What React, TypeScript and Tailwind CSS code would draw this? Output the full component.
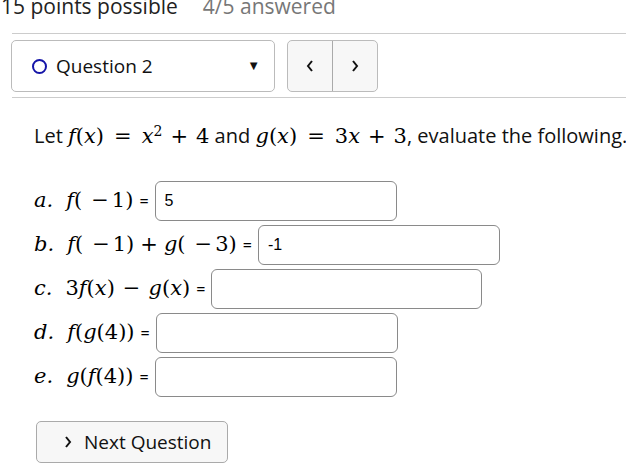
import React from 'react';

const sans = { fontFamily: '"Open Sans", "Noto Sans", sans-serif' };

function M({ children }: { children: React.ReactNode }) {
  return <span className="font-['DejaVu_Serif',serif] text-[21px] text-black">{children}</span>;
}

function I({ children }: { children: React.ReactNode }) {
  return <i className="italic">{children}</i>;
}

// binary operators with TeX-like spacing
function Op({ children, wide }: { children: React.ReactNode; wide?: boolean }) {
  return <span className={wide ? 'mx-[8px]' : 'mx-[6px]'}>{children}</span>;
}

function Eq() {
  return <span className="mx-[10px]">=</span>;
}

// the "( − 1)" style minus
function Neg() {
  return <span className="ml-[9px] mr-[3px]">−</span>;
}

function Row({ label, value, width, children }: { label: string; value?: string; width: number; children: React.ReactNode }) {
  return (
    <div className="flex items-center h-10">
      <M>
        <I>{label}.</I>
        <span className="ml-[13px]">{children}</span>
      </M>
      <span className="mx-[6px] text-[16px] text-black font-['Open_Sans',sans-serif]">=</span>
      <input
        readOnly
        value={value ?? ''}
        style={{ width }}
        className="h-10 rounded-[6px] border border-[#8a8a8a] bg-white px-[9px] font-['Liberation_Sans',Arial,sans-serif] text-[16px] text-black outline-none"
      />
    </div>
  );
}

export default function App() {
  return (
    <div className="w-[626px] h-[467px] overflow-hidden bg-white" style={sans}>
      {/* header */}
      <div className="-mt-[9px] flex items-center gap-[25px] pl-[1px] text-[21px] leading-[30px] whitespace-nowrap">
        <span className="text-[#222]">15 points possible</span>
        <span className="text-[#777]">4/5 answered</span>
      </div>
      <div className="ml-[12px] mt-[12px] border-t border-[#ccc]" />

      <div className="flex gap-[12px] pl-[11px] pt-[6px]">
        <div className="flex h-[52px] w-[264px] items-center rounded-[5px] border border-[#bbb] pl-[20px] pr-[14px]">
          <span className="h-[15px] w-[15px] rounded-full border-2 border-[#1515a8]" />
          <span className="ml-[9px] text-[19px] text-[#111]">Question 2</span>
          <span className="ml-auto text-[13px] text-[#111]">▼</span>
        </div>
        <div className="flex h-[52px] w-[91px] rounded-[5px] border border-[#bbb] bg-[#f7f7f7]">
          <button className="flex flex-1 items-center justify-center border-r border-[#aaa]">
            <svg width="10" height="14" viewBox="0 0 10 14"><path d="M7 2 L3 7 L7 12" fill="none" stroke="#111" strokeWidth="2" /></svg>
          </button>
          <button className="flex flex-1 items-center justify-center">
            <svg width="10" height="14" viewBox="0 0 10 14"><path d="M3 2 L7 7 L3 12" fill="none" stroke="#111" strokeWidth="2" /></svg>
          </button>
        </div>
      </div>
      <div className="ml-[12px] mt-[5px] border-t border-[#ccc]" />

      {/* question */}
      <div className="pl-[34px] pt-[24px] whitespace-nowrap text-[20px] leading-[27px] text-[#111]">
        Let{' '}
        <M>
          <I>f</I>(<I>x</I>)<Eq /><I>x</I>
          <sup className="text-[14px]">2</sup>
          <Op wide>+</Op>4
        </M>{' '}
        and{' '}
        <M>
          <I>g</I>(<I>x</I>)<Eq />3<I>x</I>
          <Op wide>+</Op>3
        </M>
        , evaluate the following.
      </div>

      <div className="flex flex-col gap-[4px] pl-[34px] pt-[31px]">
        <Row label="a" value="5" width={242}>
          <I>f</I>(<Neg />1)
        </Row>
        <Row label="b" value="-1" width={242}>
          <I>f</I>(<Neg />1)<Op>+</Op>
          <I>g</I>(<Neg />3)
        </Row>
        <Row label="c" width={271}>
          3<I>f</I>(<I>x</I>)<Op wide>−</Op>
          <I>g</I>(<I>x</I>)
        </Row>
        <Row label="d" width={242}>
          <I>f</I>(<I>g</I>(4))
        </Row>
        <Row label="e" width={242}>
          <I>g</I>(<I>f</I>(4))
        </Row>
      </div>

      <div className="pl-[36px] pt-[24px]">
        <button className="flex h-[42px] w-[192px] items-center rounded-[5px] border border-[#aaa] bg-[#f7f7f7] pl-[26px] text-[19px] text-[#111]">
          <svg width="10" height="14" viewBox="0 0 10 14" className="mr-[11px]"><path d="M3 2 L7 7 L3 12" fill="none" stroke="#111" strokeWidth="2" /></svg>
          Next Question
        </button>
      </div>
    </div>
  );
}
